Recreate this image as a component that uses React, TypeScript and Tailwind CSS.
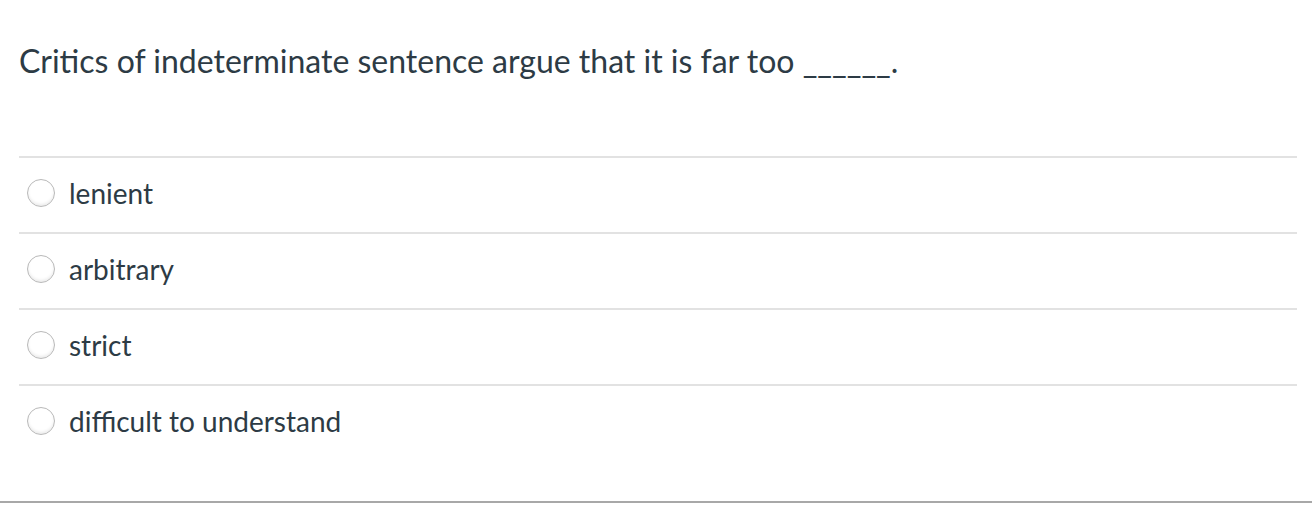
export default function App() {
  const answers = ["lenient", "arbitrary", "strict", "difficult to understand"];

  return (
    <div className="min-h-screen bg-white text-[#2d3b45]" style={{ fontFamily: "Lato, 'Noto Sans', sans-serif" }}>
      <div className="pl-[19px] pr-[15px]">
        {/* Question */}
        <div className="pt-[39px] pb-[73px] text-[32px] leading-[44px]">
          Critics of indeterminate sentence argue that it is far too ______.
        </div>

        {/* Answers */}
        <div>
          {answers.map((a) => (
            <label
              key={a}
              className="flex h-[76px] items-center border-t-2 border-[#e2e2e2] pb-[4px] pl-[8px]"
            >
              <span className="mr-[14px] h-[28px] w-[28px] shrink-0 rounded-full border border-[#b9b9b9] bg-white shadow-[inset_0_-2px_3px_rgba(0,0,0,0.08)]" />
              <span className="text-[28px] leading-none">{a}</span>
            </label>
          ))}
        </div>
      </div>
      <div className="mt-[41px] h-[2px] w-full bg-[#a8a8a8]" />
    </div>
  );
}
